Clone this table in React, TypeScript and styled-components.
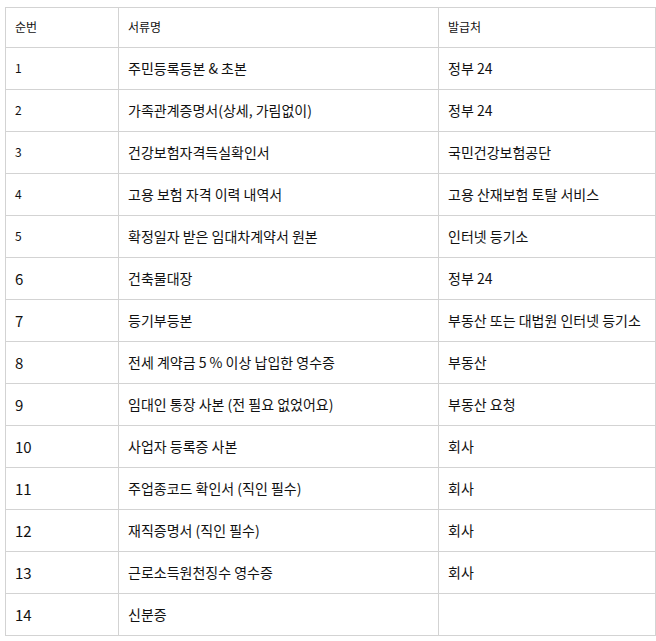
import styled, { createGlobalStyle } from 'styled-components';

const GlobalStyle = createGlobalStyle`
  html, body {
    margin: 0;
    padding: 0;
    background: #fff;
  }
  body {
    font-family: "Noto Sans CJK KR", "Noto Sans", sans-serif;
    color: #111;
  }
`;

const Page = styled.div`
  padding: 7px 0 0 5px;
`;

const Table = styled.table`
  width: 650px;
  border-collapse: collapse;
  table-layout: fixed;
  border: 1px solid #d3d3d3;
`;

const Cell = styled.td<{ $size?: number }>`
  height: 41px;
  padding: 0 0 0 9px;
  border: 1px solid #d3d3d3;
  font-size: ${(p) => p.$size ?? 14}px;
  line-height: 1.2;
  vertical-align: middle;
  text-align: left;
  white-space: nowrap;
  overflow: hidden;
`;

const HeadCell = styled(Cell).attrs({ as: 'th' })`
  height: 39px;
  font-size: 12px;
  font-weight: normal;
`;

const rows: [string, string, string][] = [
  ['1', '주민등록등본 & 초본', '정부 24'],
  ['2', '가족관계증명서(상세, 가림없이)', '정부 24'],
  ['3', '건강보험자격득실확인서', '국민건강보험공단'],
  ['4', '고용 보험 자격 이력 내역서', '고용 산재보험 토탈 서비스'],
  ['5', '확정일자 받은 임대차계약서 원본', '인터넷 등기소'],
  ['6', '건축물대장', '정부 24'],
  ['7', '등기부등본', '부동산 또는 대법원 인터넷 등기소'],
  ['8', '전세 계약금 5 % 이상 납입한 영수증', '부동산'],
  ['9', '임대인 통장 사본 (전 필요 없었어요)', '부동산 요청'],
  ['10', '사업자 등록증 사본', '회사'],
  ['11', '주업종코드 확인서 (직인 필수)', '회사'],
  ['12', '재직증명서 (직인 필수)', '회사'],
  ['13', '근로소득원천징수 영수증', '회사'],
  ['14', '신분증', ''],
];

const App = () => {
  return (
    <Page>
      <GlobalStyle />
      <Table>
        <colgroup>
          <col style={{ width: 113 }} />
          <col style={{ width: 320 }} />
          <col style={{ width: 217 }} />
        </colgroup>
        <thead>
          <tr>
            <HeadCell>순번</HeadCell>
            <HeadCell>서류명</HeadCell>
            <HeadCell>발급처</HeadCell>
          </tr>
        </thead>
        <tbody>
          {rows.map(([no, name, issuer]) => (
            <tr key={no}>
              <Cell $size={Number(no) <= 5 ? 12 : 15}>{no}</Cell>
              <Cell>{name}</Cell>
              <Cell>{issuer}</Cell>
            </tr>
          ))}
        </tbody>
      </Table>
    </Page>
  );
};

export default App;
